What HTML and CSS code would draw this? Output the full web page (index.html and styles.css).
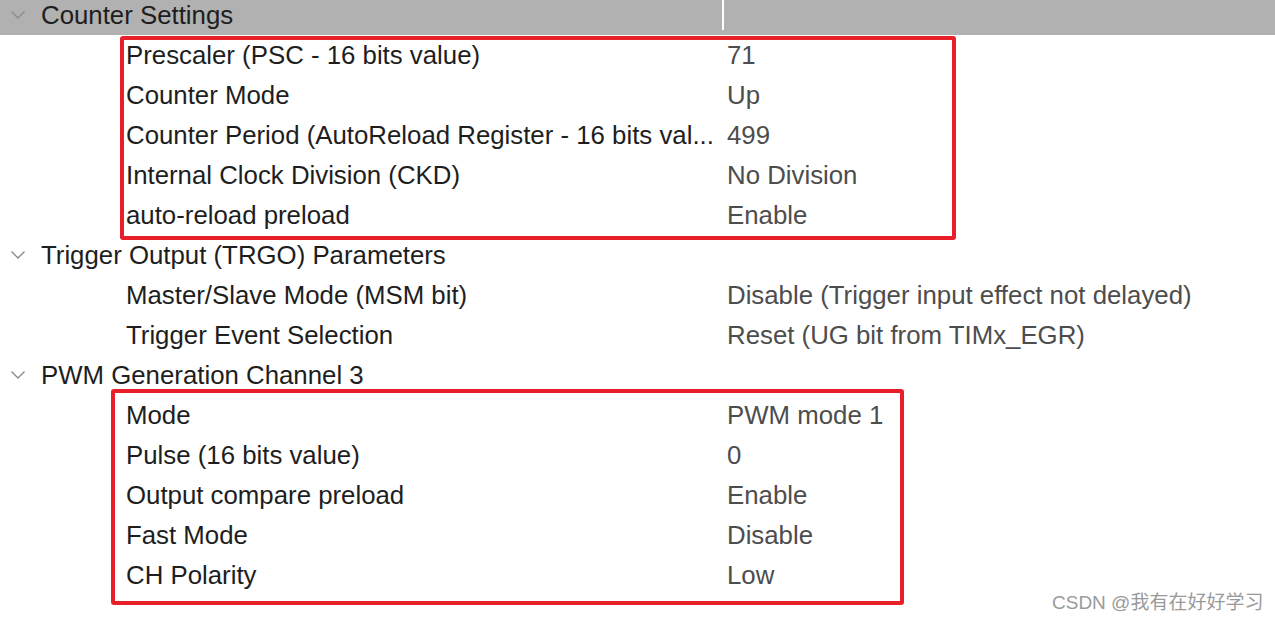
FILE: index.html
```html
<!DOCTYPE html>
<html>
<head>
<meta charset="utf-8">
<link rel="stylesheet" href="styles.css">
</head>
<body>
<div class="tree">
  <div class="row group head">
    <div class="name"><span class="chev"><svg width="16" height="10" viewBox="0 0 16 10"><path d="M1.5 1.5 L8 8 L14.5 1.5" fill="none" stroke="#8a8a8a" stroke-width="1.4"/></svg></span>Counter Settings</div>
    <div class="val"></div>
  </div>
  <div class="row"><div class="name sub">Prescaler (PSC - 16 bits value)</div><div class="val">71</div></div>
  <div class="row"><div class="name sub">Counter Mode</div><div class="val">Up</div></div>
  <div class="row"><div class="name sub">Counter Period (AutoReload Register - 16 bits val...</div><div class="val">499</div></div>
  <div class="row"><div class="name sub">Internal Clock Division (CKD)</div><div class="val">No Division</div></div>
  <div class="row"><div class="name sub">auto-reload preload</div><div class="val">Enable</div></div>
  <div class="row group">
    <div class="name"><span class="chev"><svg width="16" height="10" viewBox="0 0 16 10"><path d="M1.5 1.5 L8 8 L14.5 1.5" fill="none" stroke="#8a8a8a" stroke-width="1.4"/></svg></span>Trigger Output (TRGO) Parameters</div>
    <div class="val"></div>
  </div>
  <div class="row"><div class="name sub">Master/Slave Mode (MSM bit)</div><div class="val">Disable (Trigger input effect not delayed)</div></div>
  <div class="row"><div class="name sub">Trigger Event Selection</div><div class="val">Reset (UG bit from TIMx_EGR)</div></div>
  <div class="row group">
    <div class="name"><span class="chev"><svg width="16" height="10" viewBox="0 0 16 10"><path d="M1.5 1.5 L8 8 L14.5 1.5" fill="none" stroke="#8a8a8a" stroke-width="1.4"/></svg></span>PWM Generation Channel 3</div>
    <div class="val"></div>
  </div>
  <div class="row"><div class="name sub">Mode</div><div class="val">PWM mode 1</div></div>
  <div class="row"><div class="name sub">Pulse (16 bits value)</div><div class="val">0</div></div>
  <div class="row"><div class="name sub">Output compare preload</div><div class="val">Enable</div></div>
  <div class="row"><div class="name sub">Fast Mode</div><div class="val">Disable</div></div>
  <div class="row"><div class="name sub">CH Polarity</div><div class="val">Low</div></div>
</div>
<div class="mark mark1"></div>
<div class="mark mark2"></div>
<div class="watermark">CSDN @我有在好好学习</div>
</body>
</html>
```
FILE: styles.css
```css
html, body {
  margin: 0;
  padding: 0;
  background: #ffffff;
  width: 1275px;
  height: 617px;
  overflow: hidden;
  position: relative;
}
.tree {
  font-family: "Liberation Sans", Arial, sans-serif;
  font-size: 25.8px;
  color: #1e1e1e;
}
.row {
  display: flex;
  height: 40px;
  align-items: center;
}
.row.head {
  height: 35px;
  align-items: flex-start;
  background: #b1b1b1;
}
.row.head .name, .row.head .val {
  height: 30px;
  line-height: 30px;
}
.row.head .name {
  border-right: 2px solid #ffffff;
}
.name {
  width: 722px;
  flex: none;
  display: flex;
  align-items: center;
  white-space: nowrap;
  overflow: hidden;
}
.group .name {
  padding-left: 10px;
  width: 712px;
}
.chev {
  display: inline-flex;
  width: 31px;
  flex: none;
}
.name.sub {
  padding-left: 126px;
  width: 596px;
}
.val {
  flex: 1;
  padding-left: 5px;
  color: #4d4d4d;
  white-space: nowrap;
}
.mark {
  position: absolute;
  border: 4px solid #e81e28;
  border-radius: 3px;
  box-sizing: border-box;
}
.mark1 {
  left: 120px;
  top: 36px;
  width: 836px;
  height: 204px;
}
.mark2 {
  left: 111px;
  top: 389px;
  width: 793px;
  height: 216px;
}
.watermark {
  position: absolute;
  left: 1052px;
  top: 587px;
  font-family: "Liberation Sans", "Noto Sans CJK SC", sans-serif;
  font-size: 19px;
  color: #9a9a9a;
}
```
